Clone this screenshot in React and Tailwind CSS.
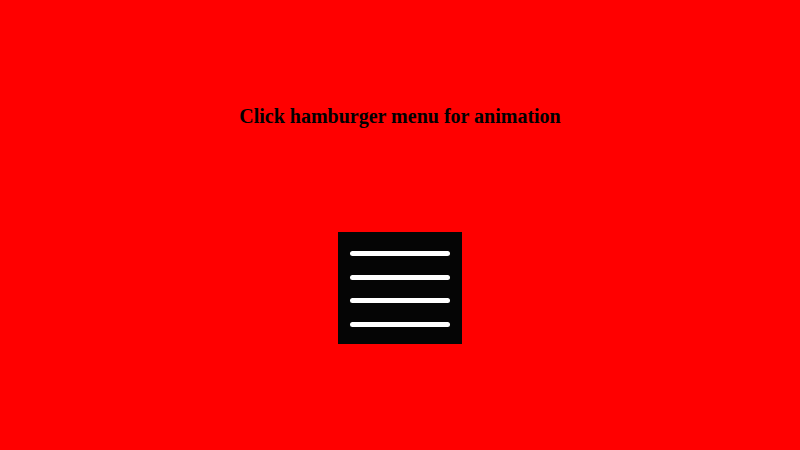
export default function App() {
  return (
    <div className="w-[800px] h-[450px] bg-[#ff0000] flex flex-col items-center" style={{ fontFamily: '"Liberation Serif", serif' }}>
      <h1 className="mt-[103px] text-[20px] leading-[26px] font-bold text-black">Click hamburger menu for animation</h1>
      <button className="mt-[103px] w-[124px] h-[112px] bg-[#050505] flex flex-col justify-start items-center pt-[19px] gap-[18.5px]">
        <span className="block w-[100px] h-[5px] rounded-full bg-white"></span>
        <span className="block w-[100px] h-[5px] rounded-full bg-white"></span>
        <span className="block w-[100px] h-[5px] rounded-full bg-white"></span>
        <span className="block w-[100px] h-[5px] rounded-full bg-white"></span>
      </button>
    </div>
  );
}
